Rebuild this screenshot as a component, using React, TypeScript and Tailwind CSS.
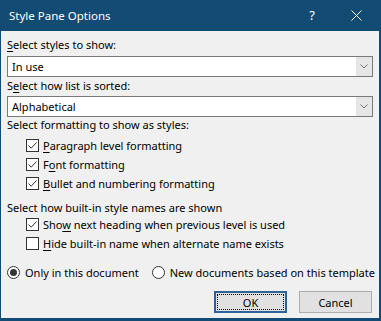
import { ReactNode } from "react";

function Key({ children }: { children: ReactNode }) {
  return <span className="underline underline-offset-[2px] decoration-[1px]">{children}</span>;
}

function Combo({ value }: { value: string }) {
  return (
    <div className="flex h-[21px] border border-[#7a7a7a] bg-white">
      <div className="flex flex-1 items-center pl-[4px] leading-[15px]">{value}</div>
      <div className="flex w-[16px] items-center justify-center border border-[#e3e3e3] bg-[#e6e6e6]">
        <svg width="8" height="5" viewBox="0 0 8 5">
          <path d="M0.5 0.5 L4 4 L7.5 0.5" fill="none" stroke="#707070" strokeWidth="1" />
        </svg>
      </div>
    </div>
  );
}

function Check({ checked, children }: { checked: boolean; children: ReactNode }) {
  return (
    <div className="flex h-[19px] items-center pl-[19px]">
      <div className="flex h-[13px] w-[13px] items-center justify-center border border-[#333333] bg-white">
        {checked && (
          <svg width="11" height="11" viewBox="0 0 11 11">
            <path d="M1.5 5.5 L4.2 8.2 L9.5 2.5" fill="none" stroke="#333333" strokeWidth="1" />
          </svg>
        )}
      </div>
      <span className="ml-[4px] whitespace-nowrap leading-[15px]">{children}</span>
    </div>
  );
}

function Radio({ checked, children }: { checked: boolean; children: ReactNode }) {
  return (
    <div className="flex h-[19px] items-center">
      <div className="flex h-[13px] w-[13px] items-center justify-center rounded-full border border-[#333333] bg-white">
        {checked && <div className="h-[7px] w-[7px] rounded-full bg-[#333333]" />}
      </div>
      <span className="ml-[5px] whitespace-nowrap leading-[15px]">{children}</span>
    </div>
  );
}

export default function App() {
  return (
    <div
      className="flex h-[321px] w-[381px] flex-col border-b-[3px] border-l border-r-2 border-[#124b73] bg-[#f0f0f0] text-[11px] text-black"
      style={{ fontFamily: '"Noto Sans", "Open Sans", sans-serif' }}
    >
      <div className="flex h-[31px] items-center bg-[#124b73] text-white">
        <span className="ml-[8px] flex-1 text-[11.5px] leading-[15px]">Style Pane Options</span>
        <span className="mr-[36px] text-[13px] leading-[15px]">?</span>
        <svg className="mr-[17px]" width="11" height="11" viewBox="0 0 11 11">
          <path d="M0.5 0.5 L10.5 10.5 M10.5 0.5 L0.5 10.5" stroke="white" strokeWidth="1" />
        </svg>
      </div>

      <div className="flex flex-col px-[6px]">
        <div className="mt-[6px] leading-[15px]">
          <Key>S</Key>elect styles to show:
        </div>
        <div className="mt-[4px]">
          <Combo value="In use" />
        </div>

        <div className="mt-[1px] leading-[15px]">
          S<Key>e</Key>lect how list is sorted:
        </div>
        <div className="mt-[3px]">
          <Combo value="Alphabetical" />
        </div>

        <div className="mt-[0px] leading-[15px]">Select formatting to show as styles:</div>
        <div className="mt-[4px] flex flex-col">
          <Check checked>
            <Key>P</Key>aragraph level formatting
          </Check>
          <Check checked>
            F<Key>o</Key>nt formatting
          </Check>
          <Check checked>
            <Key>B</Key>ullet and numbering formatting
          </Check>
        </div>

        <div className="mt-[7px] leading-[15px]">Select how built-in style names are shown</div>
        <div className="flex flex-col">
          <Check checked>
            Sho<Key>w</Key> next heading when previous level is used
          </Check>
          <Check checked={false}>
            <Key>H</Key>ide built-in name when alternate name exists
          </Check>
        </div>

        <div className="mt-[10px] flex gap-[13px]">
          <Radio checked>Only in this document</Radio>
          <Radio checked={false}>New documents based on this template</Radio>
        </div>

        <div className="mt-[9px] flex justify-end gap-[12px] pr-[1px]">
          <button className="flex h-[22px] w-[73px] items-center justify-center border-2 border-[#2d6399] bg-[#e1e1e1] p-[1px]">
            <span className="flex h-full w-full items-center justify-center border border-dotted border-black leading-[15px]">
              OK
            </span>
          </button>
          <button className="flex h-[22px] w-[73px] items-center justify-center border border-[#adadad] bg-[#e1e1e1] leading-[15px]">
            Cancel
          </button>
        </div>
      </div>
    </div>
  );
}
